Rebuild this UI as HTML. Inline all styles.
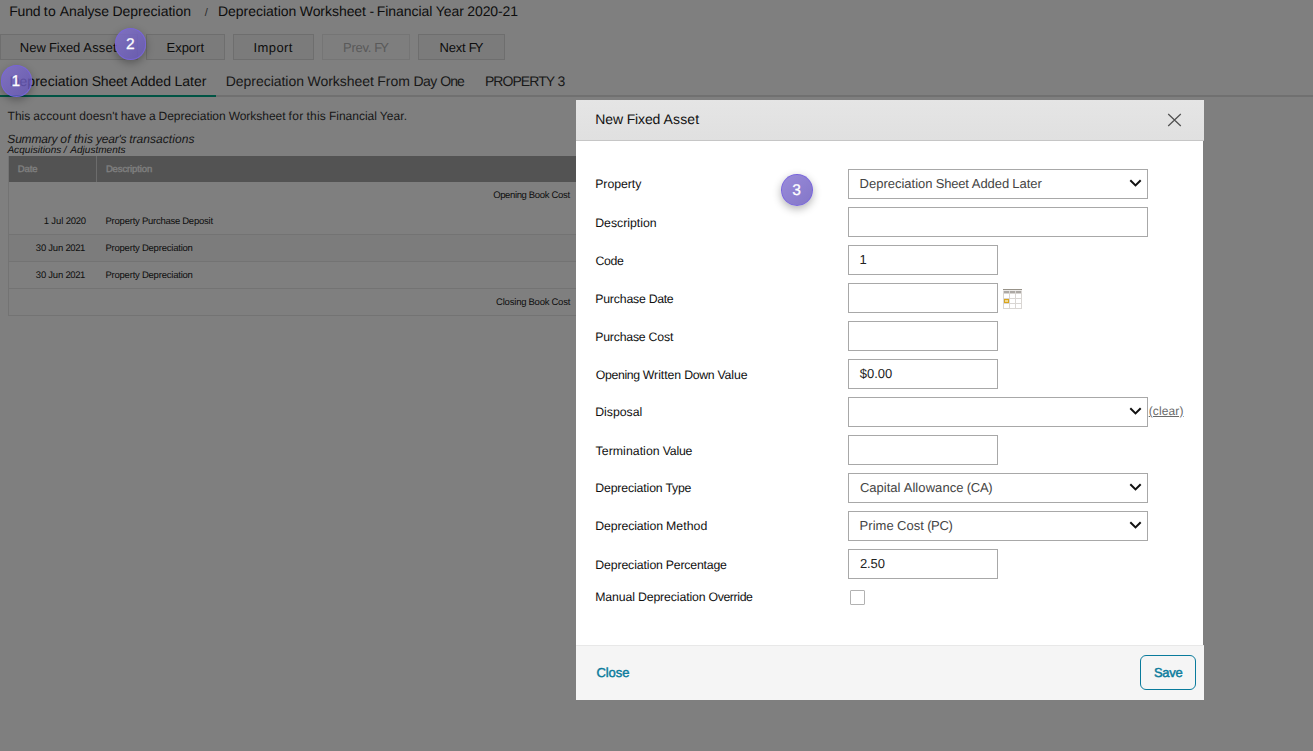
<!DOCTYPE html>
<html lang="en">
<head>
<meta charset="utf-8">
<title>Depreciation Worksheet - New Fixed Asset</title>
<style>
html,body{margin:0;padding:0;}
body{width:1313px;height:751px;overflow:hidden;position:relative;background:#fff;font-family:"Liberation Sans",Arial,sans-serif;}
.layer{position:absolute;left:0;top:0;width:1313px;height:751px;}
.t{position:absolute;white-space:pre;line-height:1em;text-rendering:geometricPrecision;font-family:"Liberation Sans",Arial,sans-serif;}
.b{position:absolute;box-sizing:border-box;}
.btn{border:1px solid #dcdcdc;background:#f6f6f6;top:34px;height:26px;}
.btn.dis{background:#fdfdfd;border-color:#eaeaea;}
#overlay{background:rgba(0,0,0,.5);}
.inp{border:1px solid #a8a8a8;background:#fff;height:30px;}
.badge{border-radius:50%;width:31.6px;height:31.6px;background:linear-gradient(135deg,rgba(128,110,208,.8),rgba(100,84,186,.8));border:1.5px solid rgba(120,100,222,.85);box-shadow:0 3px 8px rgba(0,0,0,.3);}
.chev{position:absolute;width:13px;height:8px;}
</style>
</head>
<body>
<div class="layer" id="page">
  <!-- toolbar buttons -->
  <div class="b btn" style="left:0;width:138px"></div>
  <div class="b btn" style="left:146px;width:79px"></div>
  <div class="b btn" style="left:233px;width:81px"></div>
  <div class="b btn dis" style="left:322px;width:88px"></div>
  <div class="b btn" style="left:418px;width:87px"></div>
  <!-- tab strip -->
  <div class="b" style="left:0;top:95px;width:1313px;height:2px;background:#e0e0e0"></div>
  <div class="b" style="left:0;top:95px;width:216px;height:2px;background:#00a888"></div>
  <!-- table -->
  <div class="b" style="left:8px;top:156px;width:1000px;height:26px;background:#a7a7a7;border-left:1px solid #e6e6e6"></div>
  <div class="b" style="left:96px;top:156px;width:1px;height:26px;background:#d8d8d8"></div>
  <div class="b" style="left:8px;top:182px;width:1000px;height:134px;border:1px solid #e6e6e6;border-top:0"></div>
  <div class="b" style="left:9px;top:234px;width:998px;height:28px;background:#f8f8f8;border-top:1px solid #e6e6e6;border-bottom:1px solid #e6e6e6"></div>
  <div class="b" style="left:9px;top:288px;width:998px;height:1px;background:#e6e6e6"></div>
<span class="ln"><span class="t" style="left:9.24px;top:4.00px;font-size:14px;letter-spacing:-0.210px;color:#1a1a1a;">Fund</span> <span class="t" style="left:43.79px;top:4.00px;font-size:14px;letter-spacing:0.436px;color:#1a1a1a;">to</span> <span class="t" style="left:59.81px;top:4.00px;font-size:14px;letter-spacing:-0.097px;color:#1a1a1a;">Analyse</span> <span class="t" style="left:112.41px;top:4.00px;font-size:14px;letter-spacing:0.005px;color:#1a1a1a;">Depreciation</span></span>
<span class="t" style="left:204.74px;top:8.00px;font-size:11px;letter-spacing:0.000px;color:#555;">/</span>
<span class="ln"><span class="t" style="left:218.04px;top:4.00px;font-size:14px;letter-spacing:-0.032px;color:#1a1a1a;">Depreciation</span> <span class="t" style="left:299.72px;top:4.00px;font-size:14px;letter-spacing:-0.048px;color:#1a1a1a;">Worksheet</span> <span class="t" style="left:369.41px;top:4.00px;font-size:14px;letter-spacing:-0.829px;color:#1a1a1a;">-</span> <span class="t" style="left:376.70px;top:4.00px;font-size:14px;letter-spacing:-0.042px;color:#1a1a1a;">Financial</span> <span class="t" style="left:435.80px;top:4.00px;font-size:14px;letter-spacing:-0.065px;color:#1a1a1a;">Year</span> <span class="t" style="left:467.28px;top:4.00px;font-size:14px;letter-spacing:-0.104px;color:#1a1a1a;">2020-21</span></span>
<span class="ln"><span class="t" style="left:19.80px;top:41.00px;font-size:13px;letter-spacing:-0.014px;color:#1a1a1a;">New</span> <span class="t" style="left:49.00px;top:41.00px;font-size:13px;letter-spacing:-0.147px;color:#1a1a1a;">Fixed</span> <span class="t" style="left:83.29px;top:41.00px;font-size:13px;letter-spacing:0.206px;color:#1a1a1a;">Asset</span></span>
<span class="t" style="left:166.50px;top:41.00px;font-size:13px;letter-spacing:-0.009px;color:#1a1a1a;">Export</span>
<span class="t" style="left:253.58px;top:41.00px;font-size:13px;letter-spacing:0.392px;color:#1a1a1a;">Import</span>
<span class="ln"><span class="t" style="left:343.00px;top:41.00px;font-size:13px;letter-spacing:-0.257px;color:#b4b4b4;">Prev.</span> <span class="t" style="left:374.20px;top:41.00px;font-size:13px;letter-spacing:-1.981px;color:#b4b4b4;">FY</span></span>
<span class="ln"><span class="t" style="left:439.40px;top:41.00px;font-size:13px;letter-spacing:-0.140px;color:#1a1a1a;">Next</span> <span class="t" style="left:468.71px;top:41.00px;font-size:13px;letter-spacing:-2.009px;color:#1a1a1a;">FY</span></span>
<span class="ln"><span class="t" style="left:9.44px;top:74.00px;font-size:14px;letter-spacing:0.017px;color:#222;">Depreciation</span> <span class="t" style="left:91.73px;top:74.00px;font-size:14px;letter-spacing:-0.217px;color:#222;">Sheet</span> <span class="t" style="left:130.72px;top:74.00px;font-size:14px;letter-spacing:-0.030px;color:#222;">Added</span> <span class="t" style="left:174.52px;top:74.00px;font-size:14px;letter-spacing:0.014px;color:#222;">Later</span></span>
<span class="ln"><span class="t" style="left:225.64px;top:74.00px;font-size:14px;letter-spacing:-0.019px;color:#333;">Depreciation</span> <span class="t" style="left:307.48px;top:74.00px;font-size:14px;letter-spacing:-0.033px;color:#333;">Worksheet</span> <span class="t" style="left:377.31px;top:74.00px;font-size:14px;letter-spacing:-0.010px;color:#333;">From</span> <span class="t" style="left:413.39px;top:74.00px;font-size:14px;letter-spacing:-0.519px;color:#333;">Day</span> <span class="t" style="left:440.20px;top:74.00px;font-size:14px;letter-spacing:-0.874px;color:#333;">One</span></span>
<span class="ln"><span class="t" style="left:484.94px;top:74.00px;font-size:14px;letter-spacing:-0.943px;color:#333;">PROPERTY</span> <span class="t" style="left:557.62px;top:74.00px;font-size:14px;letter-spacing:0.061px;color:#333;">3</span></span>
<span class="ln"><span class="t" style="left:7.53px;top:110.00px;font-size:12px;letter-spacing:0.032px;color:#333;">This</span> <span class="t" style="left:33.29px;top:110.00px;font-size:12px;letter-spacing:0.132px;color:#333;">account</span> <span class="t" style="left:79.21px;top:110.00px;font-size:12px;letter-spacing:0.049px;color:#333;">doesn&#x27;t</span> <span class="t" style="left:120.84px;top:110.00px;font-size:12px;letter-spacing:-0.201px;color:#333;">have</span> <span class="t" style="left:149.03px;top:110.00px;font-size:12px;letter-spacing:-0.180px;color:#333;">a</span> <span class="t" style="left:158.50px;top:110.00px;font-size:12px;letter-spacing:-0.016px;color:#333;">Depreciation</span> <span class="t" style="left:228.65px;top:110.00px;font-size:12px;letter-spacing:-0.028px;color:#333;">Worksheet</span> <span class="t" style="left:288.50px;top:110.00px;font-size:12px;letter-spacing:0.336px;color:#333;">for</span> <span class="t" style="left:306.49px;top:110.00px;font-size:12px;letter-spacing:0.220px;color:#333;">this</span> <span class="t" style="left:329.02px;top:110.00px;font-size:12px;letter-spacing:-0.026px;color:#333;">Financial</span> <span class="t" style="left:379.78px;top:110.00px;font-size:12px;letter-spacing:0.116px;color:#333;">Year.</span></span>
<span class="ln"><span class="t" style="left:7.34px;top:133.00px;font-size:12px;letter-spacing:-0.198px;color:#333;font-style:italic;">Summary</span> <span class="t" style="left:60.21px;top:133.00px;font-size:12px;letter-spacing:0.381px;color:#333;font-style:italic;">of</span> <span class="t" style="left:73.89px;top:133.00px;font-size:12px;letter-spacing:0.132px;color:#333;font-style:italic;">this</span> <span class="t" style="left:96.02px;top:133.00px;font-size:12px;letter-spacing:-0.232px;color:#333;font-style:italic;">year&#x27;s</span> <span class="t" style="left:129.18px;top:133.00px;font-size:12px;letter-spacing:0.046px;color:#333;font-style:italic;">transactions</span></span>
<span class="ln"><span class="t" style="left:7.38px;top:146.00px;font-size:10px;letter-spacing:0.054px;color:#222;font-style:italic;">Acquisitions</span> <span class="t" style="left:63.82px;top:146.00px;font-size:10px;letter-spacing:1.263px;color:#222;font-style:italic;">/</span> <span class="t" style="left:70.30px;top:146.00px;font-size:10px;letter-spacing:0.021px;color:#222;font-style:italic;">Adjustments</span></span>
<span class="t" style="left:17.79px;top:165.00px;font-size:9.5px;letter-spacing:-0.125px;color:#fff;-webkit-text-stroke:0.3px #fff;">Date</span>
<span class="t" style="left:105.89px;top:165.00px;font-size:9.5px;letter-spacing:-0.114px;color:#fff;-webkit-text-stroke:0.3px #fff;">Description</span>
<span class="ln"><span class="t" style="left:493.18px;top:191.00px;font-size:9.5px;letter-spacing:-0.372px;color:#222;">Opening</span> <span class="t" style="left:528.73px;top:191.00px;font-size:9.5px;letter-spacing:-0.284px;color:#222;">Book</span> <span class="t" style="left:551.49px;top:191.00px;font-size:9.5px;letter-spacing:-0.256px;color:#222;">Cost</span></span>
<span class="ln"><span class="t" style="left:43.85px;top:217.00px;font-size:9.5px;letter-spacing:-0.181px;color:#222;">1</span> <span class="t" style="left:51.22px;top:217.00px;font-size:9.5px;letter-spacing:0.035px;color:#222;">Jul</span> <span class="t" style="left:65.74px;top:217.00px;font-size:9.5px;letter-spacing:-0.251px;color:#222;">2020</span></span>
<span class="ln"><span class="t" style="left:105.39px;top:217.00px;font-size:9.5px;letter-spacing:-0.203px;color:#222;">Property</span> <span class="t" style="left:141.92px;top:217.00px;font-size:9.5px;letter-spacing:-0.260px;color:#222;">Purchase</span> <span class="t" style="left:182.23px;top:217.00px;font-size:9.5px;letter-spacing:-0.228px;color:#222;">Deposit</span></span>
<span class="ln"><span class="t" style="left:35.83px;top:244.00px;font-size:9.5px;letter-spacing:-0.218px;color:#222;">30</span> <span class="t" style="left:48.20px;top:244.00px;font-size:9.5px;letter-spacing:-0.128px;color:#222;">Jun</span> <span class="t" style="left:65.38px;top:244.00px;font-size:9.5px;letter-spacing:-0.379px;color:#222;">2021</span></span>
<span class="ln"><span class="t" style="left:105.39px;top:244.00px;font-size:9.5px;letter-spacing:-0.205px;color:#222;">Property</span> <span class="t" style="left:141.91px;top:244.00px;font-size:9.5px;letter-spacing:-0.215px;color:#222;">Depreciation</span></span>
<span class="ln"><span class="t" style="left:35.83px;top:271.00px;font-size:9.5px;letter-spacing:-0.218px;color:#222;">30</span> <span class="t" style="left:48.20px;top:271.00px;font-size:9.5px;letter-spacing:-0.128px;color:#222;">Jun</span> <span class="t" style="left:65.38px;top:271.00px;font-size:9.5px;letter-spacing:-0.379px;color:#222;">2021</span></span>
<span class="ln"><span class="t" style="left:105.39px;top:271.00px;font-size:9.5px;letter-spacing:-0.205px;color:#222;">Property</span> <span class="t" style="left:141.91px;top:271.00px;font-size:9.5px;letter-spacing:-0.215px;color:#222;">Depreciation</span></span>
<span class="ln"><span class="t" style="left:496.02px;top:298.00px;font-size:9.5px;letter-spacing:-0.201px;color:#222;">Closing</span> <span class="t" style="left:528.55px;top:298.00px;font-size:9.5px;letter-spacing:-0.261px;color:#222;">Book</span> <span class="t" style="left:551.41px;top:298.00px;font-size:9.5px;letter-spacing:-0.208px;color:#222;">Cost</span></span>
</div>
<div class="layer" id="overlay"></div>
<div class="layer" id="modal">
  <div class="b" style="left:576px;top:100px;width:627px;height:600px;background:#fff"></div>
  <div class="b" style="left:576px;top:100px;width:628px;height:41px;background:linear-gradient(#e5e5e5,#e0e0e0);border-bottom:1px solid #c6c6c6"></div>
  <div class="b" style="left:576px;top:645px;width:628px;height:55px;background:#f5f5f5;border-top:1px solid #e8e8e8"></div>
  <!-- close X -->
  <svg class="b" style="left:1166px;top:112px" width="16" height="16" viewBox="0 0 16 16"><path d="M2.2 2 L14.8 14 M14.8 2 L2.2 14" stroke="#505050" stroke-width="1.25" fill="none"/></svg>
  <!-- inputs -->
  <div class="b inp" style="left:848px;top:169px;width:300px"></div>
  <div class="b inp" style="left:848px;top:207px;width:300px"></div>
  <div class="b inp" style="left:848px;top:245px;width:150px"></div>
  <div class="b inp" style="left:848px;top:283px;width:150px"></div>
  <div class="b inp" style="left:848px;top:321px;width:150px"></div>
  <div class="b inp" style="left:848px;top:359px;width:150px"></div>
  <div class="b inp" style="left:848px;top:397px;width:300px"></div>
  <div class="b inp" style="left:848px;top:435px;width:150px"></div>
  <div class="b inp" style="left:848px;top:473px;width:300px"></div>
  <div class="b inp" style="left:848px;top:511px;width:300px"></div>
  <div class="b inp" style="left:848px;top:549px;width:150px"></div>
  <!-- chevrons -->
  <svg class="chev" style="left:1129px;top:179px" viewBox="0 0 13 8"><path d="M1.3 1.2 L6.5 6.4 L11.7 1.2" stroke="#111" stroke-width="2" fill="none"/></svg>
  <svg class="chev" style="left:1129px;top:407px" viewBox="0 0 13 8"><path d="M1.3 1.2 L6.5 6.4 L11.7 1.2" stroke="#111" stroke-width="2" fill="none"/></svg>
  <svg class="chev" style="left:1129px;top:483px" viewBox="0 0 13 8"><path d="M1.3 1.2 L6.5 6.4 L11.7 1.2" stroke="#111" stroke-width="2" fill="none"/></svg>
  <svg class="chev" style="left:1129px;top:521px" viewBox="0 0 13 8"><path d="M1.3 1.2 L6.5 6.4 L11.7 1.2" stroke="#111" stroke-width="2" fill="none"/></svg>
  <!-- calendar icon -->
  <svg class="b" style="left:1003px;top:289px" width="19" height="20" viewBox="0 0 19 20" shape-rendering="crispEdges">
    <rect x="0" y="0" width="19" height="20" fill="#d9d6d3"/>
    <rect x="0" y="0" width="19" height="1" fill="#979289"/>
    <rect x="0" y="1" width="19" height="1" fill="#eceae8"/>
    <g fill="#aca8a4"><rect x="1" y="2" width="5" height="2"/><rect x="7" y="2" width="5" height="2"/><rect x="13" y="2" width="5" height="2"/></g>
    <g fill="#fff">
      <rect x="1" y="5" width="5" height="4"/><rect x="7" y="5" width="5" height="4"/><rect x="13" y="5" width="5" height="4"/>
      <rect x="7" y="10" width="5" height="4"/><rect x="13" y="10" width="5" height="4"/>
      <rect x="1" y="15" width="5" height="4"/><rect x="7" y="15" width="5" height="4"/><rect x="13" y="15" width="5" height="4"/>
    </g>
    <rect x="1" y="10" width="5" height="4" fill="#d9a51c"/>
    <rect x="2" y="11" width="3" height="2" fill="#f0d88e"/>
  </svg>
  <!-- checkbox -->
  <div class="b" style="left:850px;top:590px;width:15px;height:15px;border:1px solid #b2b2b2;border-radius:1px;background:#fff"></div>
  <!-- save button -->
  <div class="b" style="left:1140px;top:655px;width:56px;height:35px;border:1px solid #0a7b9c;border-radius:6px;background:#f5f5f5"></div>
<span class="ln"><span class="t" style="left:595.24px;top:112.00px;font-size:14px;letter-spacing:-0.014px;color:#111;">New</span> <span class="t" style="left:626.69px;top:112.00px;font-size:14px;letter-spacing:-0.156px;color:#111;">Fixed</span> <span class="t" style="left:663.62px;top:112.00px;font-size:14px;letter-spacing:0.137px;color:#111;">Asset</span></span>
<span class="t" style="left:595.20px;top:178.00px;font-size:12.3px;letter-spacing:-0.045px;color:#111;">Property</span>
<span class="t" style="left:595.20px;top:217.00px;font-size:12.3px;letter-spacing:-0.009px;color:#111;">Description</span>
<span class="t" style="left:595.62px;top:255.00px;font-size:12.3px;letter-spacing:-0.378px;color:#111;">Code</span>
<span class="ln"><span class="t" style="left:595.20px;top:293.00px;font-size:12.3px;letter-spacing:-0.185px;color:#111;">Purchase</span> <span class="t" style="left:648.66px;top:293.00px;font-size:12.3px;letter-spacing:-0.356px;color:#111;">Date</span></span>
<span class="ln"><span class="t" style="left:595.20px;top:331.00px;font-size:12.3px;letter-spacing:-0.207px;color:#111;">Purchase</span> <span class="t" style="left:648.48px;top:331.00px;font-size:12.3px;letter-spacing:-0.151px;color:#111;">Cost</span></span>
<span class="ln"><span class="t" style="left:595.66px;top:369.00px;font-size:12.3px;letter-spacing:-0.333px;color:#111;">Opening</span> <span class="t" style="left:642.79px;top:369.00px;font-size:12.3px;letter-spacing:-0.050px;color:#111;">Written</span> <span class="t" style="left:684.14px;top:369.00px;font-size:12.3px;letter-spacing:-0.286px;color:#111;">Down</span> <span class="t" style="left:717.42px;top:369.00px;font-size:12.3px;letter-spacing:-0.120px;color:#111;">Value</span></span>
<span class="t" style="left:595.20px;top:406.00px;font-size:12.3px;letter-spacing:-0.022px;color:#111;">Disposal</span>
<span class="ln"><span class="t" style="left:595.59px;top:445.00px;font-size:12.3px;letter-spacing:0.049px;color:#111;">Termination</span> <span class="t" style="left:662.64px;top:445.00px;font-size:12.3px;letter-spacing:-0.176px;color:#111;">Value</span></span>
<span class="ln"><span class="t" style="left:595.20px;top:482.00px;font-size:12.3px;letter-spacing:-0.140px;color:#111;">Depreciation</span> <span class="t" style="left:665.53px;top:482.00px;font-size:12.3px;letter-spacing:-0.276px;color:#111;">Type</span></span>
<span class="ln"><span class="t" style="left:595.20px;top:520.00px;font-size:12.3px;letter-spacing:-0.106px;color:#111;">Depreciation</span> <span class="t" style="left:665.97px;top:520.00px;font-size:12.3px;letter-spacing:0.065px;color:#111;">Method</span></span>
<span class="ln"><span class="t" style="left:595.20px;top:559.00px;font-size:12.3px;letter-spacing:-0.116px;color:#111;">Depreciation</span> <span class="t" style="left:665.84px;top:559.00px;font-size:12.3px;letter-spacing:-0.207px;color:#111;">Percentage</span></span>
<span class="ln"><span class="t" style="left:595.20px;top:591.00px;font-size:12.3px;letter-spacing:-0.097px;color:#111;">Manual</span> <span class="t" style="left:637.94px;top:591.00px;font-size:12.3px;letter-spacing:-0.126px;color:#111;">Depreciation</span> <span class="t" style="left:708.46px;top:591.00px;font-size:12.3px;letter-spacing:-0.379px;color:#111;">Override</span></span>
<span class="ln"><span class="t" style="left:859.60px;top:177.00px;font-size:13px;letter-spacing:-0.007px;color:#444;">Depreciation</span> <span class="t" style="left:935.73px;top:177.00px;font-size:13px;letter-spacing:-0.227px;color:#444;">Sheet</span> <span class="t" style="left:971.80px;top:177.00px;font-size:13px;letter-spacing:-0.056px;color:#444;">Added</span> <span class="t" style="left:1012.33px;top:177.00px;font-size:13px;letter-spacing:-0.036px;color:#444;">Later</span></span>
<span class="t" style="left:859.39px;top:253.00px;font-size:13px;letter-spacing:0.000px;color:#222;">1</span>
<span class="t" style="left:859.80px;top:367.00px;font-size:13px;letter-spacing:0.000px;color:#222;">$0.00</span>
<span class="t" style="left:1148.69px;top:405.00px;font-size:12px;letter-spacing:0.126px;color:#6a6a6a;text-decoration:underline;">(clear)</span>
<span class="ln"><span class="t" style="left:859.99px;top:481.00px;font-size:13px;letter-spacing:-0.001px;color:#444;">Capital</span> <span class="t" style="left:903.67px;top:481.00px;font-size:13px;letter-spacing:0.073px;color:#444;">Allowance</span> <span class="t" style="left:966.81px;top:481.00px;font-size:13px;letter-spacing:-0.286px;color:#444;">(CA)</span></span>
<span class="ln"><span class="t" style="left:859.60px;top:519.00px;font-size:13px;letter-spacing:0.046px;color:#444;">Prime</span> <span class="t" style="left:897.01px;top:519.00px;font-size:13px;letter-spacing:0.051px;color:#444;">Cost</span> <span class="t" style="left:927.18px;top:519.00px;font-size:13px;letter-spacing:-0.388px;color:#444;">(PC)</span></span>
<span class="t" style="left:859.90px;top:557.00px;font-size:13px;letter-spacing:-0.105px;color:#222;">2.50</span>
<span class="t" style="left:596.49px;top:666.00px;font-size:13px;letter-spacing:-0.091px;color:#0a7b9c;-webkit-text-stroke:0.45px #0a7b9c;">Close</span>
<span class="t" style="left:1153.90px;top:666.00px;font-size:13px;letter-spacing:-0.229px;color:#0a7b9c;-webkit-text-stroke:0.45px #0a7b9c;">Save</span>
</div>
<div class="layer" id="top">
  <div class="b badge" style="left:0.8px;top:65px"></div>
  <div class="b badge" style="left:114.9px;top:28px"></div>
  <div class="b badge" style="left:781px;top:174px"></div>
<span class="t" style="left:11.41px;top:74.00px;font-size:15.5px;letter-spacing:0.000px;color:#fff;-webkit-text-stroke:0.3px #fff;">1</span>
<span class="t" style="left:126.00px;top:37.00px;font-size:15.5px;letter-spacing:0.000px;color:#fff;-webkit-text-stroke:0.3px #fff;">2</span>
<span class="t" style="left:792.19px;top:183.00px;font-size:15.5px;letter-spacing:0.000px;color:#fff;-webkit-text-stroke:0.3px #fff;">3</span>
</div>
</body>
</html>
